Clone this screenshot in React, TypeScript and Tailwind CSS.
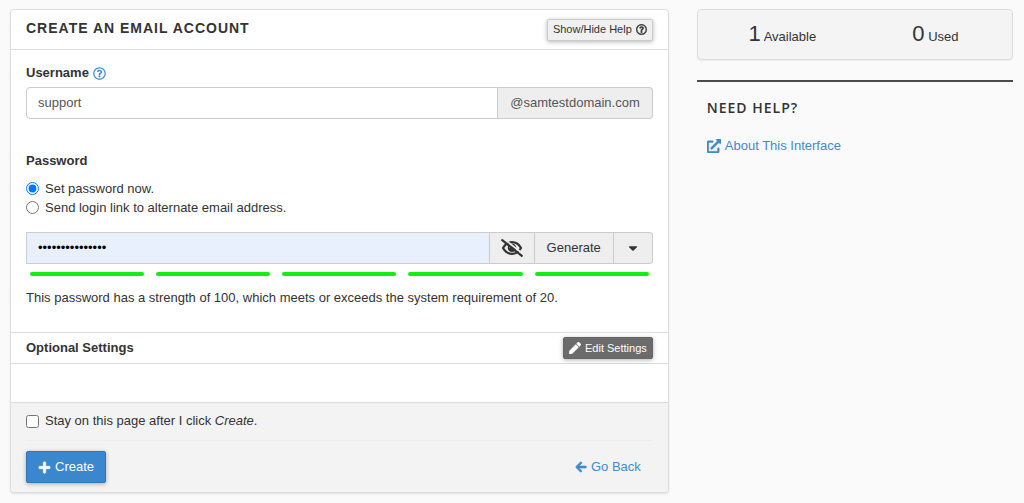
import React, { useState } from 'react';
import { FaArrowLeft, FaCaretDown, FaExternalLinkAlt, FaPen, FaPlus, FaRegQuestionCircle } from 'react-icons/fa';

const STRENGTH_BARS = [1, 2, 3, 4, 5];

const EyeSlashIcon: React.FC = () => (
  <svg width="22" height="18" viewBox="0 0 22 18" fill="none" aria-hidden="true">
    <path d="M2 9C4.2 5.2 7.3 3.2 11 3.2S17.8 5.2 20 9C17.8 12.8 14.7 14.8 11 14.8S4.2 12.8 2 9Z" stroke="currentColor" strokeWidth="2.2" strokeLinejoin="round" />
    <circle cx="11" cy="8.8" r="4.3" fill="currentColor" />
    <path d="M8.8 8.4C8.9 7.3 9.7 6.6 10.8 6.5" stroke="#eeeeee" strokeWidth="1.1" strokeLinecap="round" />
    <path d="M2.6 -0.4L22.4 15.2" stroke="#eeeeee" strokeWidth="1.8" />
    <path d="M1.2 1.2L20.8 16.8" stroke="currentColor" strokeWidth="2.2" strokeLinecap="round" />
  </svg>
);

const Stat: React.FC<{ value: number; label: string }> = ({ value, label }) => (
  <div className="text-center leading-8">
    <span className="text-[22px]">{value}</span> {label}
  </div>
);

const EmailForm: React.FC = () => {
  const [username, setUsername] = useState('support');
  const [password, setPassword] = useState('correcthorse123');
  const [mode, setMode] = useState<'now' | 'link'>('now');
  const [stay, setStay] = useState(false);

  return (
    <form
      onSubmit={(e) => e.preventDefault()}
      className="rounded border border-[#dddddd] bg-white shadow-[0_1px_2px_rgba(0,0,0,0.1)]"
    >
      <header className="flex h-10 items-center justify-between border-b border-[#dddddd] px-[15px]">
        <h1 className="pb-1 text-sm font-bold tracking-[1px] uppercase">Create an Email Account</h1>
        <button
          type="button"
          className="flex h-[22px] items-center gap-1 rounded-xs border border-[#cccccc] bg-[#f0f0f0] px-[5px] text-[11px] shadow-[0_1px_4px_rgba(0,0,0,0.3)]"
        >
          Show/Hide Help <FaRegQuestionCircle size={11} stroke="currentColor" strokeWidth={16} />
        </button>
      </header>

      <div className="px-[15px] pt-[13px] pb-6">
        <div className="flex items-center gap-1 leading-5">
          <label htmlFor="username" className="font-bold">Username</label>
          <FaRegQuestionCircle size={13} className="text-[#428bca]" />
        </div>
        <div className="mt-1 flex h-8">
          <input
            id="username"
            type="text"
            value={username}
            onChange={(e) => setUsername(e.target.value)}
            className="min-w-0 flex-1 rounded-l-sm border border-[#cccccc] bg-white px-[11px] text-[#555555] outline-none"
          />
          <span className="flex items-center rounded-r-sm border border-l-0 border-[#cccccc] bg-[#eeeeee] px-3 text-[#555555]">
            @samtestdomain.com
          </span>
        </div>

        <label htmlFor="password" className="mt-8 block leading-5 font-bold">Password</label>
        <div className="mt-2">
          <label className="flex items-center gap-1.5 leading-[19px]">
            <input
              type="radio"
              name="mode"
              checked={mode === 'now'}
              onChange={() => setMode('now')}
              className="size-[13px]"
            />
            Set password now.
          </label>
          <label className="flex items-center gap-1.5 leading-[19px]">
            <input
              type="radio"
              name="mode"
              checked={mode === 'link'}
              onChange={() => setMode('link')}
              className="size-[13px]"
            />
            Send login link to alternate email address.
          </label>
        </div>

        <div className="mt-[15px] flex h-8">
          <input
            id="password"
            type="password"
            value={password}
            onChange={(e) => setPassword(e.target.value)}
            className="min-w-0 flex-1 border border-[#cccccc] bg-[#e8f0fe] px-[11px] text-black outline-none"
          />
          <button type="button" aria-label="Toggle password" className="border border-l-0 border-[#cccccc] bg-[#eeeeee] px-[11px]">
            <EyeSlashIcon />
          </button>
          <button type="button" className="border border-l-0 border-[#cccccc] bg-[#eeeeee] px-3">
            Generate
          </button>
          <button type="button" aria-label="More options" className="rounded-r-sm border border-l-0 border-[#cccccc] bg-[#eeeeee] px-3">
            <FaCaretDown size={14} />
          </button>
        </div>

        <div className="mt-2 flex gap-3 px-1">
          {STRENGTH_BARS.map((n) => (
            <div key={n} className="h-1 flex-1 rounded-full bg-[#11ee11]" />
          ))}
        </div>
        <p className="mt-3 leading-5">
          This password has a strength of 100, which meets or exceeds the system requirement of 20.
        </p>
      </div>

      <div className="flex h-8 items-center justify-between border-y border-[#dddddd] px-[15px]">
        <h2 className="font-bold">Optional Settings</h2>
        <button
          type="button"
          className="flex h-[22px] items-center gap-1 rounded-xs border border-[#666666] bg-[#6b6b6b] px-[5px] text-[11px] text-white shadow-[0_1px_4px_rgba(0,0,0,0.3)]"
        >
          <FaPen size={12} /> Edit Settings
        </button>
      </div>
      <div className="h-[38px]" />

      <footer className="rounded-b border-t border-[#dddddd] bg-[#f3f3f3] px-[15px] pt-2 pb-[9px]">
        <label className="flex items-center gap-1.5 leading-5">
          <input type="checkbox" checked={stay} onChange={(e) => setStay(e.target.checked)} className="size-[13px]" />
          <span>
            Stay on this page after I click <em>Create</em>.
          </span>
        </label>
        <hr className="mt-[9px] mb-2.5 border-[#eeeeee]" />
        <div className="flex items-center justify-between">
          <button
            type="submit"
            className="flex h-8 items-center gap-1 rounded-xs border border-[#3277b5] bg-[#3a87cd] px-[11px] text-white shadow-[0_1px_4px_rgba(0,0,0,0.3)]"
          >
            <FaPlus size={13} stroke="currentColor" strokeWidth={24} /> Create
          </button>
          <a href="#" className="flex items-center gap-1 pr-3 text-[#428bca]">
            <FaArrowLeft size={12} stroke="currentColor" strokeWidth={32} /> Go Back
          </a>
        </div>
      </footer>
    </form>
  );
};

const Sidebar: React.FC = () => (
  <aside>
    <div className="grid grid-cols-2 rounded border border-[#dddddd] bg-[#f4f4f4] pt-2 pb-1.5 pl-2 shadow-[0_1px_1px_rgba(0,0,0,0.05)]">
      <Stat value={1} label="Available" />
      <Stat value={0} label="Used" />
    </div>
    <section className="mt-5 border-t-2 border-[#4a4a4a] px-2.5 pt-4">
      <h2 className="font-['Open_Sans',sans-serif] text-sm leading-5 font-semibold tracking-[1px] uppercase">
        Need Help?
      </h2>
      <a href="#" className="mt-[18px] flex items-center gap-1 leading-5 text-[#428bca]">
        <FaExternalLinkAlt size={14} stroke="currentColor" strokeWidth={16} /> About This Interface
      </a>
    </section>
  </aside>
);

export default function App() {
  return (
    <main className="min-h-screen bg-[#fafafa] pt-[9px] pr-[11px] pl-2.5 font-['Liberation_Sans',Arial,sans-serif] text-[13px] text-[#333333]">
      <div className="grid grid-cols-[25fr_12fr] items-start gap-7">
        <EmailForm />
        <Sidebar />
      </div>
    </main>
  );
}
